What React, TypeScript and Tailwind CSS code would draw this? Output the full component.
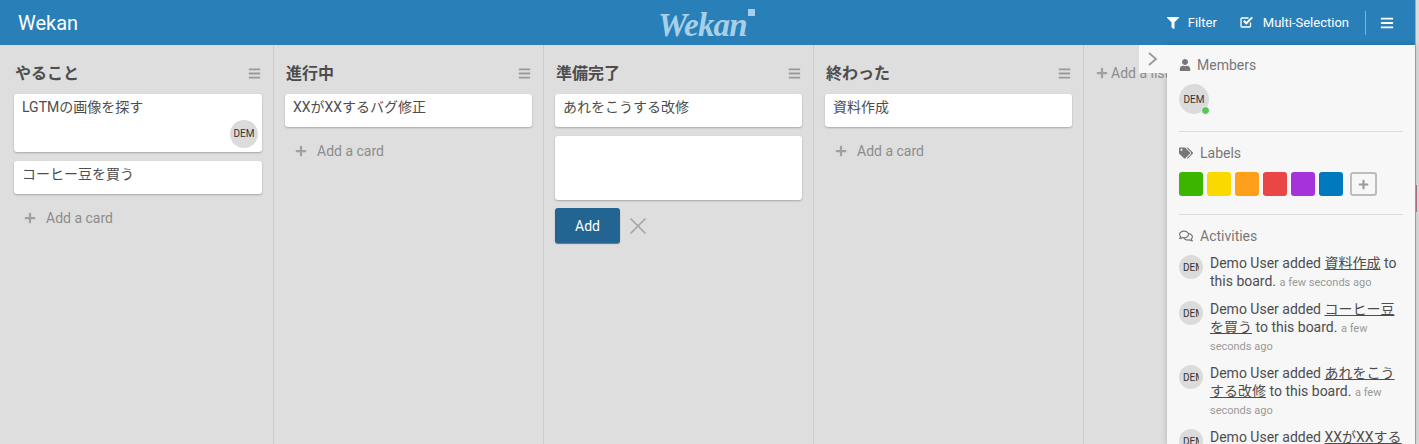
import { FaBars, FaFilter, FaPlus, FaRegComments, FaTags, FaUser } from "react-icons/fa";
import { X } from "lucide-react";

const font = "font-['Roboto','Noto_Sans_CJK_JP',sans-serif]";

function Card({ title, avatar }: { title: string; avatar?: boolean }) {
  return (
    <div className="mb-[9px] rounded-[3px] bg-white px-2 pt-1 pb-[11px] text-sm leading-[18px] text-[#4d4d4d] shadow-[0_1px_2px_rgba(0,0,0,0.25)]">
      {title}
      {avatar && (
        <div className="-mr-1 mt-[4px] mb-[-7px] flex justify-end">
          <div className="flex h-7 w-7 items-center justify-center overflow-hidden rounded-full bg-[#dbdbdb] text-[10px] text-[#333]">DEM</div>
        </div>
      )}
    </div>
  );
}

function AddCard() {
  return (
    <div className="flex items-center gap-2.5 pl-2.5 pt-[3px] text-sm leading-[24px] text-[#8c8c8c]">
      <FaPlus className="h-3 w-3 text-[#a0a0a0]" />
      Add a card
    </div>
  );
}

function List({ title, className, children }: { title: string; className: string; children: React.ReactNode }) {
  return (
    <section className={`h-full shrink-0 border-r border-[#cccccc] pr-[11px] ${className}`}>
      <div className="flex h-[49px] items-center justify-between pt-[8px] pr-px">
        <h2 className="pl-px text-base font-bold text-[#4d4d4d]">{title}</h2>
        <FaBars className="h-[13px] w-[13px] text-[#999]" />
      </div>
      {children}
    </section>
  );
}

function Activity({ link, after, time }: { link: string; after: string; time: string }) {
  return (
    <div className="mb-[10px] flex gap-[7px]">
      <div className="mt-px flex h-6 w-6 shrink-0 items-center overflow-hidden rounded-full bg-[#dbdbdb] pl-1 text-[10px] text-[#333]">
        <span className="w-4 overflow-hidden whitespace-nowrap">DEM</span>
      </div>
      <p className="text-sm leading-[18px] text-[#4d4d4d]">
        Demo User added <a className="underline">{link}</a> {after} <span className="text-[11px] leading-none text-[#999]">{time}</span>
      </p>
    </div>
  );
}

const labels = ["bg-[#3cb500]", "bg-[#fad900]", "bg-[#ff9f1a]", "bg-[#eb4646]", "bg-[#a632db]", "bg-[#0079bf]"];

export default function App() {
  return (
    <div className={`${font} flex h-[444px] w-[1419px] overflow-hidden bg-white`}>
      <div className="flex h-[444px] w-[1415px] shrink-0 flex-col">
        <header className="relative flex h-[45px] shrink-0 items-center justify-between bg-[#2980b9] pl-[18px] pr-[21px] text-white">
          <span className="text-xl">Wekan</span>
          <div className="absolute left-[658px] top-[9px] flex items-start text-[#a8cfe8]">
            <span className="font-['Liberation_Serif',serif] text-[33px] leading-[32px] font-bold tracking-tight italic">Wekan</span>
            <svg width="9" height="9" className="ml-[1px] mt-0"><rect width="7" height="7" fill="currentColor" /></svg>
          </div>
          <div className="flex items-center text-[13px]">
            <FaFilter className="mr-[9px] h-3 w-3" />
            Filter
            <svg width="14" height="12" viewBox="0 0 14 12" fill="none" stroke="currentColor" className="ml-[23px] mr-[9px] -translate-y-px">
              <path d="M10.5 6.5V10a1 1 0 0 1-1 1H2a1 1 0 0 1-1-1V3a1 1 0 0 1 1-1h6.5" strokeWidth="1.3" />
              <path d="M3.8 4.8 6.3 7.3 12.2 1.4" strokeWidth="2" />
            </svg>
            Multi-Selection
            <div className="ml-4 mr-[14px] h-6 w-px bg-[#7fb2d5]" />
            <FaBars className="h-[14px] w-[14px]" />
          </div>
        </header>
        <main className="relative flex min-h-0 flex-1 bg-[#dedede]">
          <List title="やること" className="w-[274px] pl-[14px]">
            <Card title="LGTMの画像を探す" avatar />
            <Card title="コーヒー豆を買う" />
            <AddCard />
          </List>
          <List title="進行中" className="w-[270px] pl-[11px]">
            <Card title="XXがXXするバグ修正" />
            <AddCard />
          </List>
          <List title="準備完了" className="w-[270px] pl-[11px]">
            <Card title="あれをこうする改修" />
            <div className="h-16 rounded-[3px] bg-white shadow-[0_1px_2px_rgba(0,0,0,0.25)]" />
            <div className="mt-2 flex items-center gap-1">
              <button className="h-[35px] w-[65px] rounded-[3px] bg-[#226592] text-sm font-normal text-white shadow-[0_1px_1px_rgba(0,0,0,0.5)]">Add</button>
              <X className="h-7 w-7 text-[#a6a6a6]" strokeWidth={1.5} />
            </div>
          </List>
          <List title="終わった" className="w-[270px] pl-[11px]">
            <Card title="資料作成" />
            <AddCard />
          </List>
          <div className="flex items-start gap-[3px] pl-[12px] pt-[20px] text-sm leading-4 text-[#8c8c8c]">
            <FaPlus className="mt-[2px] h-3 w-3 text-[#a0a0a0]" />
            Add a list
          </div>
          <div className="absolute inset-y-0 right-0 w-[248px] bg-[#f7f7f7] px-3 pt-[12px] shadow-[0_0_6px_rgba(0,0,0,0.2)]">
            <div className="absolute -left-7 top-0 flex h-7 w-7 items-center justify-center bg-[#f7f7f7]">
              <svg width="10" height="14" viewBox="0 0 10 14" fill="none" stroke="#999" strokeWidth="1.8"><polyline points="1,1 8,7 1,13" /></svg>
            </div>
            <h3 className="flex items-center gap-1.5 text-sm leading-4 text-[#777]"><FaUser className="h-3 w-3" />Members</h3>
            <div className="relative mt-[11px] flex h-[30px] w-[30px] items-center justify-center rounded-full bg-[#dbdbdb] text-[10px] text-[#333]">
              DEM
              <span className="absolute -right-px -bottom-px h-[9px] w-[9px] rounded-full border border-[#f7f7f7] bg-[#5cc45c]" />
            </div>
            <div className="mt-[17px] border-t border-[#dcdcdc] pt-[13px]">
              <h3 className="flex items-center gap-[7px] text-sm leading-4 text-[#777]"><FaTags className="h-[14px] w-[14px]" />Labels</h3>
              <div className="mt-[11px] flex items-center gap-1">
                {labels.map((c) => (
                  <span key={c} className={`h-6 w-6 rounded-[3px] ${c}`} />
                ))}
                <span className="ml-[3px] flex h-6 w-[27px] items-center justify-center rounded-[3px] border-2 border-[#bdbdbd] text-[#999]"><FaPlus className="h-[11px] w-[11px]" /></span>
              </div>
            </div>
            <div className="mt-[18px] border-t border-[#dcdcdc] pt-[13px]">
              <h3 className="flex items-center gap-[7px] text-sm leading-4 text-[#777]"><FaRegComments className="h-[14px] w-[14px]" />Activities</h3>
              <div className="mt-[10px]">
                <Activity link="資料作成" after="to this board." time="a few seconds ago" />
                <Activity link="コーヒー豆を買う" after="to this board." time="a few seconds ago" />
                <Activity link="あれをこうする改修" after="to this board." time="a few seconds ago" />
                <Activity link="XXがXXするバグ修正" after="to this board." time="a few seconds ago" />
              </div>
            </div>
          </div>
        </main>
      </div>
      <div className="h-full flex-1 border-l border-[#aaaaaa] bg-[#dcdcdc]">
        <div className="mt-[185px] h-[27px] w-px bg-[#b5758a]" />
      </div>
    </div>
  );
}
